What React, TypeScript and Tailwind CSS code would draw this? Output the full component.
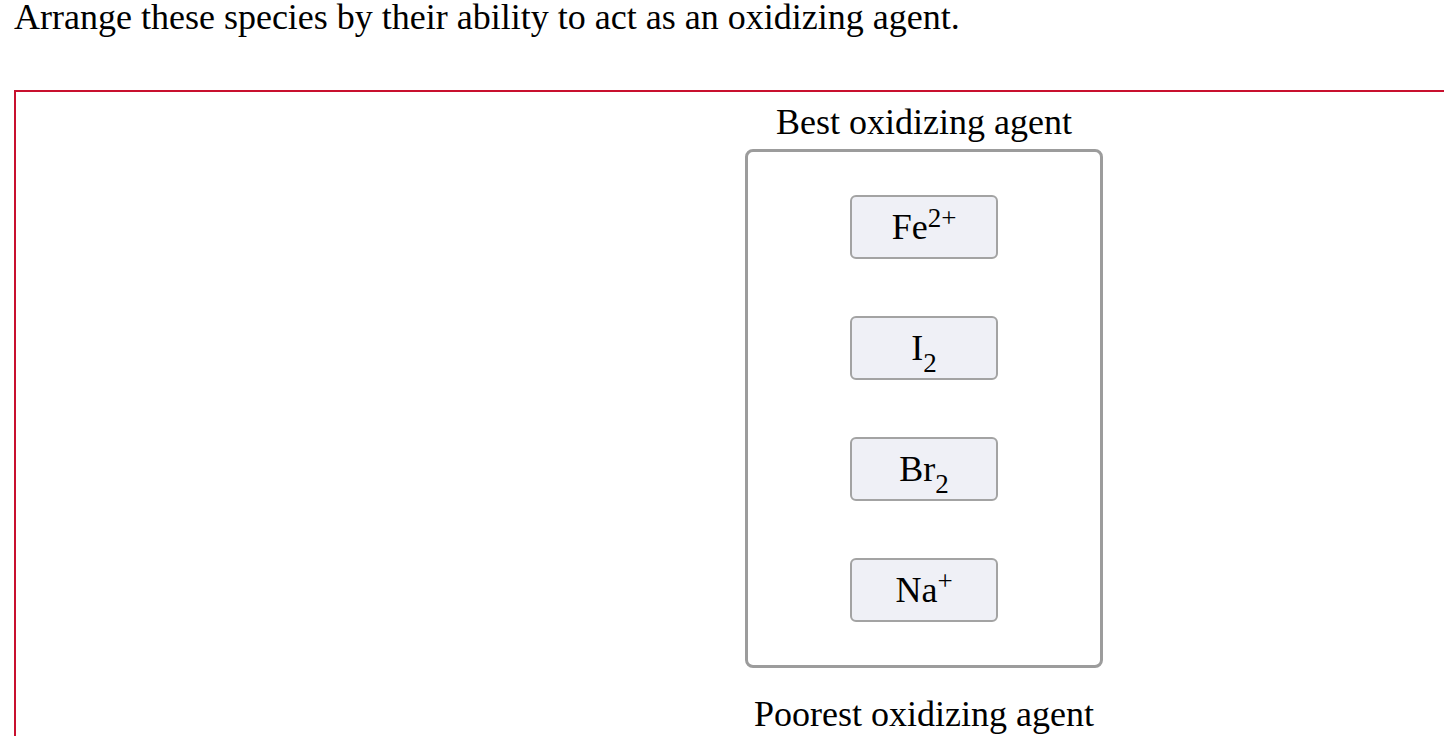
import React from "react";

const serif = { fontFamily: '"Liberation Serif", "Times New Roman", serif' };

function Sup({ children }: { children: React.ReactNode }) {
  return <span className="relative -top-[12px] text-[27px] leading-none">{children}</span>;
}

function Sub({ children }: { children: React.ReactNode }) {
  return <span className="relative top-[12px] text-[27px] leading-none">{children}</span>;
}

function Chip({ children }: { children: React.ReactNode }) {
  return (
    <div className="flex h-[64px] w-[148px] items-center justify-center rounded-[6px] border-2 border-[#a3a3a3] bg-[#eff0f6] text-[36px] leading-[36px] text-black">
      <span>{children}</span>
    </div>
  );
}

export default function App() {
  return (
    <div className="h-[752px] w-[1444px] overflow-hidden bg-white text-black" style={serif}>
      <div className="pl-[14px]">
        <h1 className="text-[36px] leading-[34px] font-normal">
          Arrange these species by their ability to act as an oxidizing agent.
        </h1>
        <div className="mt-[56px] w-[1818px] border-t-2 border-l-2 border-[#c8102e]">
          <div className="flex flex-col items-center pt-[8px]">
            <div className="text-[36px] leading-[44px]">Best oxidizing agent</div>
            <div className="mt-[5px] flex w-[358px] flex-col items-center gap-[57px] rounded-[8px] border-[3px] border-[#9c9c9c] py-[43px]">
              <Chip>
                Fe<Sup>2+</Sup>
              </Chip>
              <Chip>
                I<Sub>2</Sub>
              </Chip>
              <Chip>
                Br<Sub>2</Sub>
              </Chip>
              <Chip>
                Na<Sup>+</Sup>
              </Chip>
            </div>
            <div className="mt-[24px] text-[36px] leading-[44px]">Poorest oxidizing agent</div>
          </div>
        </div>
      </div>
    </div>
  );
}
